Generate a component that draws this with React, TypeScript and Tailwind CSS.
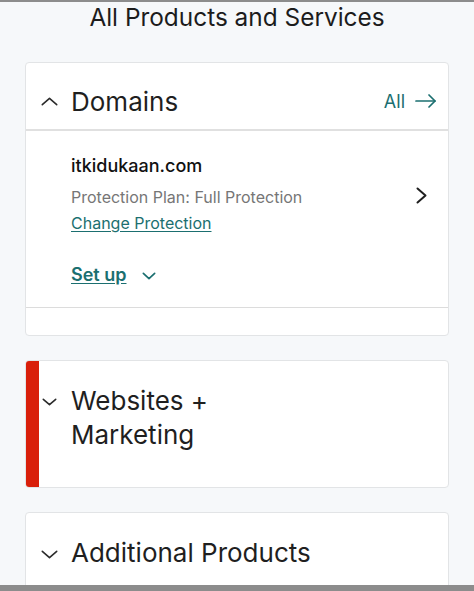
type ChevProps = { dir: 'up' | 'down' | 'right'; w: number; h: number; sw?: number; className?: string };

function Chevron({ dir, w, h, sw = 1.6, className }: ChevProps) {
  const p = sw / 2 + 0.5;
  let d = '';
  if (dir === 'up') d = `M${p} ${h - p}L${w / 2} ${p}L${w - p} ${h - p}`;
  if (dir === 'down') d = `M${p} ${p}L${w / 2} ${h - p}L${w - p} ${p}`;
  if (dir === 'right') d = `M${p} ${p}L${w - p} ${h / 2}L${p} ${h - p}`;
  return (
    <svg width={w} height={h} viewBox={`0 0 ${w} ${h}`} fill="none" stroke="currentColor" strokeWidth={sw} strokeLinecap="round" strokeLinejoin="round" className={className}>
      <path d={d} />
    </svg>
  );
}

function LongArrow() {
  return (
    <svg width="22" height="14" viewBox="0 0 22 14" fill="none" stroke="currentColor" strokeWidth="1.7" strokeLinecap="round" strokeLinejoin="round">
      <path d="M1 7h19" />
      <path d="M14 1l6 6-6 6" />
    </svg>
  );
}

export default function App() {
  return (
    <div
      className="h-[591px] w-full flex flex-col bg-[#f6f8fa] overflow-hidden"
      style={{ fontFamily: 'Inter, "Noto Sans", sans-serif' }}
    >
      <div className="h-[2px] bg-[#8c8c8c] shrink-0" />

      <div className="flex-1 overflow-hidden">
        {/* Title */}
        <h1 className="text-center text-[24.4px] leading-[30px] text-[#1c1c1c]">
          All Products and Services
        </h1>

        <div className="px-[25px] pt-[30px] flex flex-col gap-[24px]">
          {/* Domains */}
          <div className="bg-white border border-[#e2e4e6] rounded-[4px]">
            <div className="h-[68px] flex items-center pt-[10px] pl-[15px] pr-[11px] border-b-2 border-[#e0e0e0]">
              <Chevron dir="up" w={17} h={9} sw={1.6} className="text-[#2b2b2b]" />
              <span className="ml-[13px] text-[26px] text-[#1f1f1f]">Domains</span>
              <a className="ml-auto flex items-center gap-[10px] text-[18px] text-[#1b6f70]">
                All
                <LongArrow />
              </a>
            </div>

            <div className="h-[177px] flex pl-[45px] pr-[21px] pt-[23px] border-b border-[#dcdcdc]">
              <div className="flex-1">
                <div className="text-[18px] leading-[24px] font-medium text-[#111]">itkidukaan.com</div>
                <div className="mt-[8px] text-[16px] leading-[22px] text-[#767676]">Protection Plan: Full Protection</div>
                <a className="block mt-[4px] text-[16px] leading-[22px] text-[#1b6f70] underline underline-offset-2">
                  Change Protection
                </a>
                <div className="mt-[29px] flex items-center gap-[15px]">
                  <a className="text-[18px] leading-[24px] font-semibold text-[#1b6f70] underline underline-offset-2">Set up</a>
                  <Chevron dir="down" w={14} h={8} sw={1.7} className="mt-[2px] text-[#1b6f70]" />
                </div>
              </div>
              <Chevron dir="right" w={11} h={17} sw={2} className="mt-[33px] text-[#1f1f1f]" />
            </div>

            <div className="h-[27px]" />
          </div>

          {/* Websites + Marketing */}
          <div className="bg-white border border-[#e2e4e6] rounded-[4px] flex h-[128px] overflow-hidden">
            <div className="w-[13px] bg-[#d91f0a] shrink-0" />
            <div className="flex items-start pl-[3px] pt-[23px]">
              <Chevron dir="down" w={15} h={8} sw={1.6} className="mt-[14px] text-[#2b2b2b]" />
              <span className="ml-[14px] text-[26px] leading-[34px] text-[#1f1f1f]">
                Websites +<br />Marketing
              </span>
            </div>
          </div>

          {/* Additional Products */}
          <div className="bg-white border border-[#e2e4e6] rounded-[4px] h-[100px] flex items-start pl-[15px] pt-[23px]">
            <Chevron dir="down" w={17} h={9} sw={1.6} className="mt-[14px] text-[#2b2b2b]" />
            <span className="ml-[13px] text-[26px] leading-[34px] text-[#1f1f1f]">Additional Products</span>
          </div>
        </div>
      </div>

      <div className="h-[6px] bg-[#8c8c8c] shrink-0" />
    </div>
  );
}
